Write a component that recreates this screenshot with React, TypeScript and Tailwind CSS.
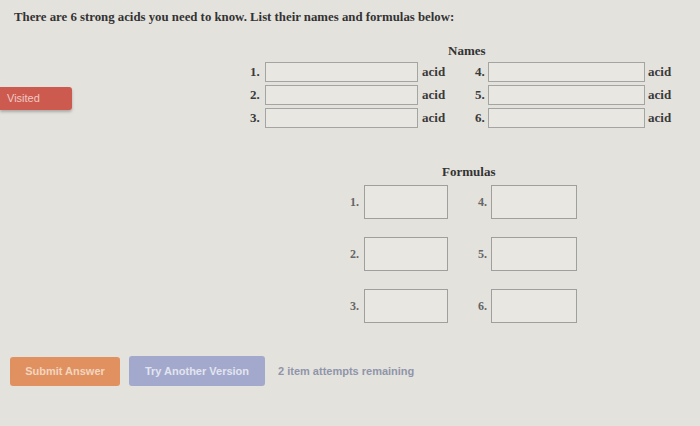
import React from "react";

const nameRows = [
  ["1.", "4."],
  ["2.", "5."],
  ["3.", "6."],
];

const formulaRows = [
  ["1.", "4."],
  ["2.", "5."],
  ["3.", "6."],
];

function NameBox() {
  return <div className="h-[20px] border border-[#a4a4a2] bg-[#e9e7e2]" />;
}

function FormulaBox() {
  return <div className="h-[34px] border border-[#9f9f9d] bg-[#e9e7e2]" />;
}

export default function App() {
  return (
    <div
      className="w-[700px] h-[426px] overflow-hidden bg-[#e4e2dd] text-[#2b2b2b]"
      style={{ fontFamily: '"Liberation Serif", serif' }}
    >
      <p className="pt-[9px] pl-[14px] text-[12.8px] leading-[16px] font-bold text-[#333]">
        There are 6 strong acids you need to know. List their names and formulas below:
      </p>

      {/* Names */}
      <div className="mt-[19px] flex items-start">
        <div
          className="mt-[43px] w-[72px] h-[23px] rounded-r-[3px] bg-[#cd5a4f] shadow-[0_2px_3px_rgba(0,0,0,0.25)] pl-[7px] text-[11px] leading-[23px] text-[#f0c9c3]"
          style={{ fontFamily: '"Liberation Sans", sans-serif' }}
        >
          Visited
        </div>
        <div className="ml-[178px] flex flex-col">
          <div className="mb-[4px] pl-[198px] text-[13px] leading-[14px] font-bold text-[#333]">Names</div>
          <div className="grid grid-cols-[15px_153px_57px_13px_157px_30px] gap-y-[3px] items-center text-[13px] font-bold text-[#3a3a3a]">
            {nameRows.map(([a, b]) => (
              <React.Fragment key={a}>
                <span>{a}</span>
                <NameBox />
                <span className="pl-[4px]">acid</span>
                <span>{b}</span>
                <NameBox />
                <span className="pl-[3px]">acid</span>
              </React.Fragment>
            ))}
          </div>
        </div>
      </div>

      {/* Formulas */}
      <div className="mt-[37px] ml-[350px] flex flex-col">
        <div className="mb-[6px] pl-[92px] text-[13px] leading-[14px] font-bold text-[#333]">Formulas</div>
        <div className="grid grid-cols-[14px_84px_30px_13px_86px] gap-y-[18px] items-center text-[12px] font-bold text-[#666]">
          {formulaRows.map(([a, b]) => (
            <React.Fragment key={a}>
              <span>{a}</span>
              <FormulaBox />
              <span />
              <span>{b}</span>
              <FormulaBox />
            </React.Fragment>
          ))}
        </div>
      </div>

      {/* Actions */}
      <div
        className="mt-[33px] ml-[10px] flex items-center gap-[9px] text-[11px] font-bold"
        style={{ fontFamily: '"Liberation Sans", sans-serif' }}
      >
        <div className="w-[110px] h-[29px] rounded-[3px] bg-[#e1915f] text-[#f3d5bf] flex items-center justify-center">
          Submit Answer
        </div>
        <div className="w-[136px] h-[30px] rounded-[3px] bg-[#a3a9cc] text-[#e2e4f0] flex items-center justify-center">
          Try Another Version
        </div>
        <span className="ml-[4px] text-[#8f95aa]">2 item attempts remaining</span>
      </div>
    </div>
  );
}
